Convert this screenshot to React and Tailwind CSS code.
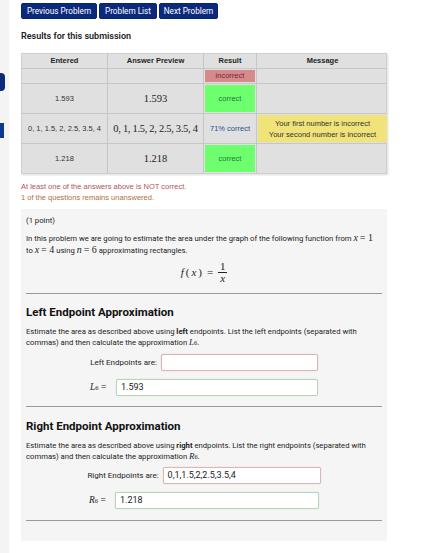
import React from "react";

const M = ({ children, className = "" }) => (
  <span className={"italic " + className} style={{ fontFamily: '"Liberation Serif", "DejaVu Serif", serif' }}>{children}</span>
);
const N = ({ children, className = "" }) => (
  <span className={className} style={{ fontFamily: '"Liberation Serif", "DejaVu Serif", serif' }}>{children}</span>
);

function Btn({ children, w }) {
  return (
    <div className={`h-[16px] ${w} flex items-center justify-center rounded-[2px] bg-[#0c2a7c] text-white text-[8.2px] border border-[#0a2370]`}>
      {children}
    </div>
  );
}

const Row = ({ entered, preview, result, msg }) => (
  <div className="grid grid-cols-[86px_96px_53px_131px] h-[30px] border-t border-[#c6c6c6]">
    <div className="flex items-center justify-center border-r border-[#c6c6c6] text-[7.5px] text-[#333] whitespace-nowrap">{entered}</div>
    <div className="flex items-center justify-center border-r border-[#c6c6c6] text-[10.5px] text-[#222] whitespace-nowrap">{preview}</div>
    {result}
    {msg}
  </div>
);

export default function App() {
  return (
    <div className="relative flex min-h-[553px] bg-white" style={{ fontFamily: 'Roboto, "Liberation Sans", sans-serif' }}>
      <div className="w-[9px] shrink-0 bg-[#f4f4f4] flex flex-col">
        <div className="mt-[73px] w-[5px] h-[18px] bg-[#0c2a7c] rounded-r-[4px]" />
        <div className="mt-[32px] w-[4px] h-[15px] bg-[#0c3a8c]" />
      </div>
      <div className="ml-[12px] w-[366px] flex flex-col">
        <div className="flex gap-[2px] mt-[3px]">
          <Btn w="w-[76px]">Previous Problem</Btn>
          <Btn w="w-[58px]">Problem List</Btn>
          <Btn w="w-[59px]">Next Problem</Btn>
        </div>
        <div className="mt-[12px] text-[9px] font-semibold text-[#222] leading-[11px]">Results for this submission</div>

        <div className="mt-[11px] bg-[#e0e0e0] border border-[#d0d0d0] shadow-[1px_1px_2px_rgba(0,0,0,0.15)]" style={{ fontFamily: '"Liberation Sans", Arial, sans-serif' }}>
          <div className="grid grid-cols-[86px_96px_53px_131px] h-[14px] text-[7.5px] font-bold text-[#222]">
            <div className="flex items-center justify-center border-r border-[#c6c6c6]">Entered</div>
            <div className="flex items-center justify-center border-r border-[#c6c6c6]">Answer Preview</div>
            <div className="flex items-center justify-center border-r border-[#c6c6c6]">Result</div>
            <div className="flex items-center justify-center">Message</div>
          </div>
          <div className="grid grid-cols-[86px_96px_53px_131px] h-[15px] border-t border-[#c6c6c6]">
            <div className="border-r border-[#c6c6c6]" />
            <div className="border-r border-[#c6c6c6]" />
            <div className="border-r border-[#c6c6c6] p-[1px]">
              <div className="h-full bg-[#d78a8c] flex items-center justify-center text-[7.5px] text-[#7a2434]">incorrect</div>
            </div>
            <div />
          </div>
          <Row
            entered="1.593"
            preview={<N>1.593</N>}
            result={<div className="border-r border-[#c6c6c6] p-[1px]"><div className="h-full bg-[#6dff6d] flex items-center justify-center text-[7.5px] text-[#1d7a3a]">correct</div></div>}
            msg={<div />}
          />
          <Row
            entered="0, 1, 1.5, 2, 2.5, 3.5, 4"
            preview={<N className="tracking-[-0.3px]">0, 1, 1.5, 2, 2.5, 3.5, 4</N>}
            result={<div className="border-r border-[#c6c6c6] flex items-center justify-center text-[7.5px] text-[#2a4f8f] whitespace-nowrap">71% correct</div>}
            msg={<div className="p-[1px]"><div className="h-full bg-[#efe37a] flex flex-col items-center justify-center text-[7.5px] text-[#333] leading-[11px]"><span>Your first number is incorrect</span><span>Your second number is incorrect</span></div></div>}
          />
          <Row
            entered="1.218"
            preview={<N>1.218</N>}
            result={<div className="border-r border-[#c6c6c6] p-[1px]"><div className="h-full bg-[#6dff6d] flex items-center justify-center text-[7.5px] text-[#1d7a3a]">correct</div></div>}
            msg={<div />}
          />
        </div>

        <div className="mt-[7px] text-[7.5px] leading-[11px]" style={{ fontFamily: '"Liberation Sans", Arial, sans-serif' }}>
          <div className="text-[#b25555]">At least one of the answers above is NOT correct.</div>
          <div className="text-[#b0703c]">1 of the questions remains unanswered.</div>
        </div>

        <div className="mt-[6px] bg-[#f5f5f5] px-[5px] pt-[6px] pb-[20px] text-[7.7px] text-[#222]">
          <div className="leading-[11px]">(1 point)</div>
          <div className="mt-[6px] leading-[11px]">
            In this problem we are going to estimate the area under the graph of the following function from <M className="text-[10px]">x</M> <N className="text-[10px]">= 1</N>
            <br />
            to <M className="text-[10px]">x</M> <N className="text-[10px]">= 4</N> using <M className="text-[10px]">n</M> <N className="text-[10px]">= 6</N> approximating rectangles.
          </div>
          <div className="mt-[5px] flex justify-center items-center gap-[2px] text-[11px]">
            <M>f</M><N>(</N><M>x</M><N>)</N><N className="mx-[3px]">=</N>
            <span className="inline-flex flex-col items-center leading-[11px]">
              <N>1</N>
              <span className="w-[9px] h-[1px] bg-[#222]" />
              <M>x</M>
            </span>
          </div>
          <div className="mt-[9px] h-[1px] bg-[#9a9a9a]" />

          <div className="mt-[12px] text-[11.5px] font-bold leading-[13px] text-[#111]">Left Endpoint Approximation</div>
          <div className="mt-[7px] leading-[11px]">
            Estimate the area as described above using <b>left</b> endpoints. List the left endpoints (separated with
            <br />
            commas) and then calculate the approximation <M className="text-[9px]">L</M><N className="text-[6.5px]">6</N>.
          </div>
          <div className="mt-[6px] flex justify-center items-center gap-[4px] text-[8px]">
            <span>Left Endpoints are:</span>
            <div className="w-[157px] h-[17px] bg-white border border-[#e0b4b4] rounded-[2px] shadow-[0_0_1px_rgba(200,80,80,0.4)]" />
          </div>
          <div className="mt-[8px] flex justify-center items-center gap-[4px]">
            <span className="w-[22px] text-[9.5px]"><M>L</M><N className="text-[6.5px]">6</N> <N>=</N></span>
            <div className="w-[202px] h-[17px] bg-white border border-[#b6d6b6] rounded-[2px] flex items-center pl-[4px] text-[9px] shadow-[0_0_1px_rgba(80,160,80,0.4)]">1.593</div>
          </div>
          <div className="mt-[10px] h-[1px] bg-[#9a9a9a]" />

          <div className="mt-[13px] text-[11.5px] font-bold leading-[13px] text-[#111]">Right Endpoint Approximation</div>
          <div className="mt-[7px] leading-[11px]">
            Estimate the area as described above using <b>right</b> endpoints. List the right endpoints (separated with
            <br />
            commas) and then calculate the approximation <M className="text-[9px]">R</M><N className="text-[6.5px]">6</N>.
          </div>
          <div className="mt-[5px] flex justify-center items-center gap-[4px] text-[8px]">
            <span>Right Endpoints are:</span>
            <div className="w-[158px] h-[17px] bg-white border border-[#e0b4b4] rounded-[2px] flex items-center pl-[4px] text-[9px] shadow-[0_0_1px_rgba(200,80,80,0.4)]">0,1,1.5,2,2.5,3.5,4</div>
          </div>
          <div className="mt-[8px] flex justify-center items-center gap-[4px]">
            <span className="w-[22px] text-[9.5px]"><M>R</M><N className="text-[6.5px]">6</N> <N>=</N></span>
            <div className="w-[204px] h-[17px] bg-white border border-[#b6d6b6] rounded-[2px] flex items-center pl-[4px] text-[9px] shadow-[0_0_1px_rgba(80,160,80,0.4)]">1.218</div>
          </div>
          <div className="mt-[11px] h-[1px] bg-[#9a9a9a]" />
        </div>
      </div>
    </div>
  );
}
